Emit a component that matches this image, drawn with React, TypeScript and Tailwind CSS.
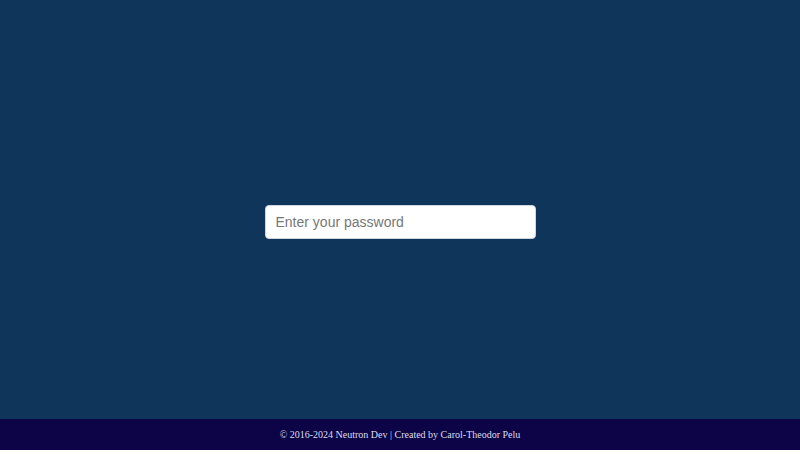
export default function App() {
  return (
    <div className="flex h-[450px] w-full flex-col bg-[#0f355b]">
      <main className="flex flex-1 items-center justify-center pt-[24px]">
        <input
          type="password"
          placeholder="Enter your password"
          className="h-[34px] w-[271px] rounded-[4px] border border-[#d0d7de] bg-white px-[10px] text-[14px] text-[#333] placeholder:text-[#777] outline-none"
          style={{ fontFamily: '"Liberation Sans", Arial, sans-serif' }}
        />
      </main>
      <footer
        className="flex h-[31px] items-center justify-center bg-[#0c0447] text-[10px] text-[#dedcee]"
        style={{ fontFamily: '"Liberation Serif", "Times New Roman", serif' }}
      >
        © 2016-2024 Neutron Dev | Created by Carol-Theodor Pelu
      </footer>
    </div>
  );
}
